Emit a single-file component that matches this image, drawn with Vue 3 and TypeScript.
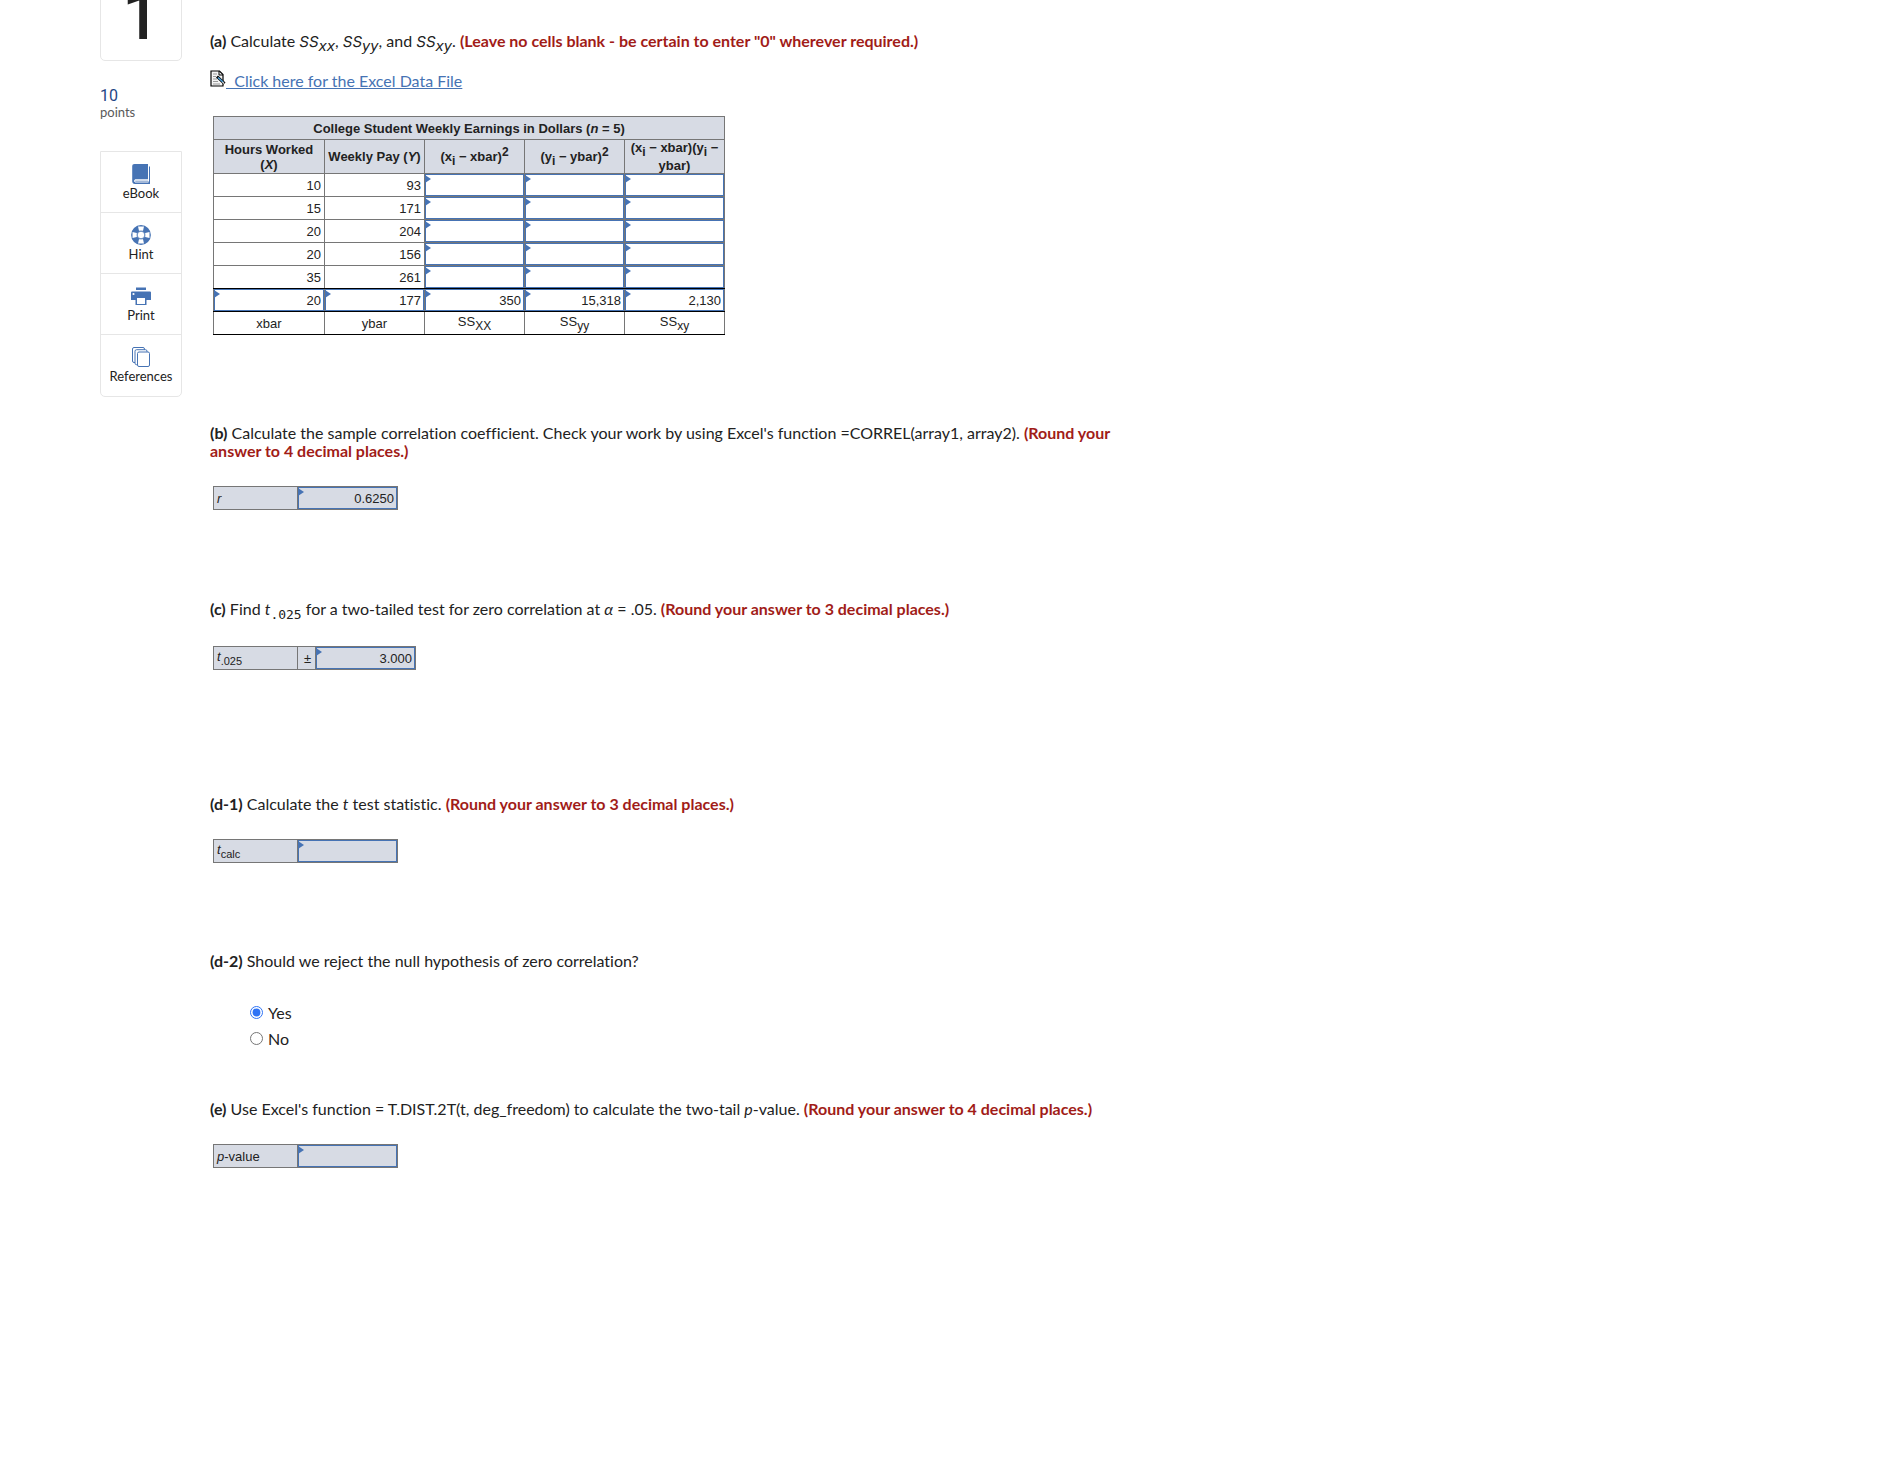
<script setup lang="ts">
import { ref } from 'vue'

interface DataRow {
  x: number
  y: number
  cells: string[]
}

const rows = ref<DataRow[]>([
  { x: 10, y: 93, cells: ['', '', ''] },
  { x: 15, y: 171, cells: ['', '', ''] },
  { x: 20, y: 204, cells: ['', '', ''] },
  { x: 20, y: 156, cells: ['', '', ''] },
  { x: 35, y: 261, cells: ['', '', ''] },
])
const columnNames = ['x deviation squared', 'y deviation squared', 'cross product']

const totals = ref([
  { name: 'xbar', value: '20' },
  { name: 'ybar', value: '177' },
  { name: 'SSxx', value: '350' },
  { name: 'SSyy', value: '15,318' },
  { name: 'SSxy', value: '2,130' },
])

const r = ref('0.6250')
const tCritical = ref('3.000')
const tCalc = ref('')
const pValue = ref('')
const reject = ref('yes')
</script>

<template>
  <div class="page">
    <aside class="sidebar">
      <div class="number">1</div>
      <div class="points"><b>10</b><span>points</span></div>
      <nav class="tools" aria-label="Question tools">
        <button type="button">
          <svg viewBox="0 0 20 20" width="20" height="20">
            <path d="M3.5 0H17v15.5H4.5c-1.5 0-1.5 1 0 1H18V2.5h1V20H4C2.200 20 1.200 18.800 1.200 17.200V2.500C1.200.8 2 0 3.500 0z" fill="#4673b4" />
            <path d="M4 16H17.500M4 18H17.500M4 16Q3 17 4 18" stroke="#fff" fill="none" />
            <path d="M17.500 2v15.500" stroke="#fff" />
          </svg>
          <span>eBook</span>
        </button>
        <button type="button">
          <svg viewBox="0 0 20 20" width="20" height="20">
            <circle cx="10" cy="10" r="6.700" fill="none" stroke="#4673b4" stroke-width="6.400" />
            <g fill="#fff">
              <path d="M7 1.500h6l-1 4.300H8z" />
              <path d="M7 18.500h6l-1-4.300H8z" />
              <path d="M1.500 7v6l4.300-1V8z" />
              <path d="M18.500 7v6l-4.300-1V8z" />
            </g>
            <circle cx="10" cy="10" r="3.800" fill="#fff" stroke="#4673b4" stroke-width=".8" />
          </svg>
          <span>Hint</span>
        </button>
        <button type="button">
          <svg viewBox="0 0 20 20" width="20" height="20">
            <path d="M5 1.500h10v2.500H5z" fill="#4673b4" />
            <path d="M1 5.500h18q1 0 1 1V14h-4.500v5h-11v-5H0V6.500q0-1 1-1z" fill="#4673b4" />
            <path d="M6 12h8v6H6z" fill="#fff" />
            <circle cx="2.500" cy="8" r="1.100" fill="#fff" />
          </svg>
          <span>Print</span>
        </button>
        <button type="button">
          <svg viewBox="0 0 20 20" width="20" height="20" fill="#fff" stroke="#4673b4">
            <rect x="1.500" y=".5" width="12" height="15" rx="1.500" />
            <rect x="4" y="2.700" width="12" height="15" rx="1.500" />
            <rect x="6.500" y="5" width="12" height="14.500" rx="1.500" />
          </svg>
          <span>References</span>
        </button>
      </nav>
    </aside>

    <main class="content">
      <section class="part-a">
        <p>
          <b>(a)</b> Calculate <i>SS<sub>xx</sub></i>, <i>SS<sub>yy</sub></i>, and
          <i>SS<sub>xy</sub></i>. <strong>(Leave no cells blank - be certain to enter "0" wherever required.)</strong>
        </p>
        <a class="file" href="#">
          <svg viewBox="0 0 16 17" width="16" height="17">
            <path d="M1 1h8.500L13 4.500V16H1z" fill="#f4f4f4" stroke="#000" stroke-width="1.200" />
            <path d="M9 1v4h4" fill="none" stroke="#000" />
            <path d="M3 4h4M3 6.500h3M3 9h4M3 11.500h5M3 14h7" stroke="#999" />
            <path d="M7 6.500l7.500 7" stroke="#000" stroke-width="3" />
            <path d="M8 7.500l5 4.500" stroke="#4fa3dc" stroke-width="1.600" />
            <path d="M12.500 12l1.500 1.500" stroke="#ddd" stroke-width="1.200" />
          </svg><span>&nbsp; Click here for the Excel Data File</span>
        </a>
        <table class="earnings">
          <colgroup>
            <col class="first" />
            <col v-for="n in 4" :key="n" />
          </colgroup>
          <thead>
            <tr><th colspan="5">College Student Weekly Earnings in Dollars (<i>n</i> = 5)</th></tr>
            <tr class="names">
              <th class="hours">Hours Worked (<i>X</i>)</th>
              <th class="pay">Weekly Pay (<i>Y</i>)</th>
              <th>(x<sub>i</sub> − xbar)<sup>2</sup></th>
              <th>(y<sub>i</sub> − ybar)<sup>2</sup></th>
              <th>(x<sub>i</sub> − xbar)(y<sub>i</sub> − ybar)</th>
            </tr>
          </thead>
          <tbody>
            <tr v-for="(row, i) in rows" :key="i">
              <td class="value">{{ row.x }}</td>
              <td class="value">{{ row.y }}</td>
              <td v-for="(name, j) in columnNames" :key="j" class="entry">
                <input v-model="row.cells[j]" type="text" :aria-label="`Row ${i + 1} ${name}`" />
              </td>
            </tr>
          </tbody>
          <tfoot>
            <tr class="ruled">
              <td v-for="total in totals" :key="total.name" class="entry">
                <input v-model="total.value" type="text" :aria-label="total.name" />
              </td>
            </tr>
            <tr class="ruled">
              <td>xbar</td>
              <td>ybar</td>
              <td>SS<sub>XX</sub></td>
              <td>SS<sub>yy</sub></td>
              <td>SS<sub>xy</sub></td>
            </tr>
          </tfoot>
        </table>
      </section>

      <section class="part-b">
        <p>
          <b>(b)</b> Calculate the sample correlation coefficient. Check your work by using Excel's function
          =CORREL(array1, array2). <strong>(Round your answer to 4 decimal places.)</strong>
        </p>
        <table class="answer">
          <tbody>
            <tr>
              <th><label for="r"><i>r</i></label></th>
              <td class="entry"><input id="r" v-model="r" type="text" /></td>
            </tr>
          </tbody>
        </table>
      </section>

      <section class="part-c">
        <p>
          <b>(c)</b> Find <i>t</i><sub class="mono">.025</sub> for a two-tailed test for zero correlation at
          <i>α</i> = .05. <strong>(Round your answer to 3 decimal places.)</strong>
        </p>
        <table class="answer">
          <tbody>
            <tr>
              <th><label for="t-critical"><i>t</i><sub>.025</sub></label></th>
              <td class="sign">±</td>
              <td class="entry"><input id="t-critical" v-model="tCritical" type="text" /></td>
            </tr>
          </tbody>
        </table>
      </section>

      <section class="part-d1">
        <p>
          <b>(d-1)</b> Calculate the <i>t</i> test statistic.
          <strong>(Round your answer to 3 decimal places.)</strong>
        </p>
        <table class="answer">
          <tbody>
            <tr>
              <th><label for="t-calc"><i>t</i><sub>calc</sub></label></th>
              <td class="entry"><input id="t-calc" v-model="tCalc" type="text" /></td>
            </tr>
          </tbody>
        </table>
      </section>

      <section class="part-d2">
        <p id="reject-question"><b>(d-2)</b> Should we reject the null hypothesis of zero correlation?</p>
        <div class="choices" role="radiogroup" aria-labelledby="reject-question">
          <label><input v-model="reject" type="radio" name="reject" value="yes" />Yes</label>
          <label><input v-model="reject" type="radio" name="reject" value="no" />No</label>
        </div>
      </section>

      <section class="part-e">
        <p>
          <b>(e)</b> Use Excel's function = T.DIST.2T(t, deg_freedom) to calculate the two-tail <i>p</i>-value.
          <strong>(Round your answer to 4 decimal places.)</strong>
        </p>
        <table class="answer">
          <tbody>
            <tr>
              <th><label for="p-value"><i>p</i>-value</label></th>
              <td class="entry"><input id="p-value" v-model="pValue" type="text" /></td>
            </tr>
          </tbody>
        </table>
      </section>
    </main>
  </div>
</template>

<style>
body {
  margin: 0;
  background: #fff;
}
</style>

<style scoped>
.page {
  display: flex;
  align-items: flex-start;
  gap: 28px;
  min-height: 100vh;
  padding: 0 100px;
  box-sizing: border-box;
  overflow: hidden;
  color: #222;
  font: 16px/18px Lato, Roboto, sans-serif;
  font-variant-ligatures: none;
}

.sidebar {
  flex: none;
  width: 82px;
}
.number {
  height: 79px;
  margin-top: -20px;
  border: 1px solid #e6e6e6;
  border-radius: 5px;
  text-align: center;
  font: 500 66px/72px Roboto, sans-serif;
}
.points {
  display: flex;
  flex-direction: column;
  margin-top: 26px;
  color: #5a5a5a;
  font-size: 13px;
  line-height: 14px;
}
.points b {
  color: #1f4685;
  font: 16px/18px Roboto, sans-serif;
}
.tools {
  display: flex;
  flex-direction: column;
  margin-top: 32px;
  border: 1px solid #e6e6e6;
  border-radius: 0 0 5px 5px;
}
.tools button {
  display: flex;
  flex-direction: column;
  align-items: center;
  height: 61px;
  padding: 12px 0 0;
  border: 0;
  border-bottom: 1px solid #e6e6e6;
  background: none;
  color: #222;
  font: 13px/18px Lato, sans-serif;
}
.tools button:last-child {
  border-bottom: 0;
}

.content {
  flex: 1;
  max-width: 906px;
}
p {
  margin: 0;
}
strong {
  color: #a11c18;
}
p sub {
  line-height: 0;
}
.part-a p i {
  font: italic 15px/0 Inter, sans-serif;
}
.part-a p sub {
  font: italic 14px/0 "DejaVu Sans", sans-serif;
}
p .mono {
  font: 13px/0 "DejaVu Sans Mono", monospace;
}

.part-a {
  padding-top: 32px;
}
.part-b {
  margin-top: 89px;
}
.part-c {
  margin-top: 90px;
}
.part-d1 {
  margin-top: 125px;
}
.part-d2 {
  margin-top: 89px;
}
.part-e {
  margin-top: 52px;
}

.file {
  display: flex;
  width: max-content;
  margin-top: 22px;
  color: #4673b4;
  text-decoration: none;
}
.file svg {
  margin-top: -2px;
}
.file span {
  text-decoration: underline;
}

table {
  border-collapse: collapse;
  table-layout: fixed;
  margin-left: 3px;
  font: 13px/15px "Liberation Sans", Arial, sans-serif;
}
th,
td {
  height: 22px;
  padding: 0;
  border: 1px solid #767676;
  text-align: center;
}
th {
  background: #d7dbe4;
}
table sub,
table sup {
  font-size: 12px;
  line-height: 12px;
}
.earnings {
  width: 512px;
  margin-top: 26px;
}
.first {
  width: 111px;
}
.names th {
  height: 33px;
}
.names .hours {
  padding: 0 8px;
}
.names .pay {
  white-space: nowrap;
}
.earnings .value {
  padding-right: 3px;
  text-align: right;
}
.ruled td {
  border-top-color: #000;
  border-bottom-color: #000;
}
.earnings tbody tr:last-child td {
  border-bottom-color: #000;
}
.entry {
  position: relative;
}
.entry::before {
  content: "";
  position: absolute;
  top: 1px;
  left: 0;
  border: solid transparent;
  border-width: 4px 0 4px 6px;
  border-left-color: #4673b4;
}
.entry input {
  display: block;
  box-sizing: border-box;
  width: 100%;
  height: 22px;
  padding: 0 2px;
  border: 1px solid #4673b4;
  border-radius: 0;
  background: transparent;
  color: #222;
  font: inherit;
  text-align: right;
}

.answer {
  margin-top: 26px;
}
.part-c .answer {
  margin-top: 28px;
}
.answer th {
  width: 80px;
  padding-left: 3px;
  font-weight: normal;
  text-align: left;
}
.answer th sub {
  font-size: 11px;
}
.answer td {
  background: #d7dbe4;
}
.answer .sign {
  width: 15px;
  padding-left: 2px;
}
.answer .entry {
  width: 99px;
}

.choices {
  display: flex;
  flex-direction: column;
  gap: 8px;
  margin: 34px 0 0 40px;
}
.choices label {
  display: flex;
  width: max-content;
  gap: 5px;
}
.choices input {
  width: 13px;
  height: 13px;
  margin: 2px 0 0;
  accent-color: #2e73f5;
}
</style>
